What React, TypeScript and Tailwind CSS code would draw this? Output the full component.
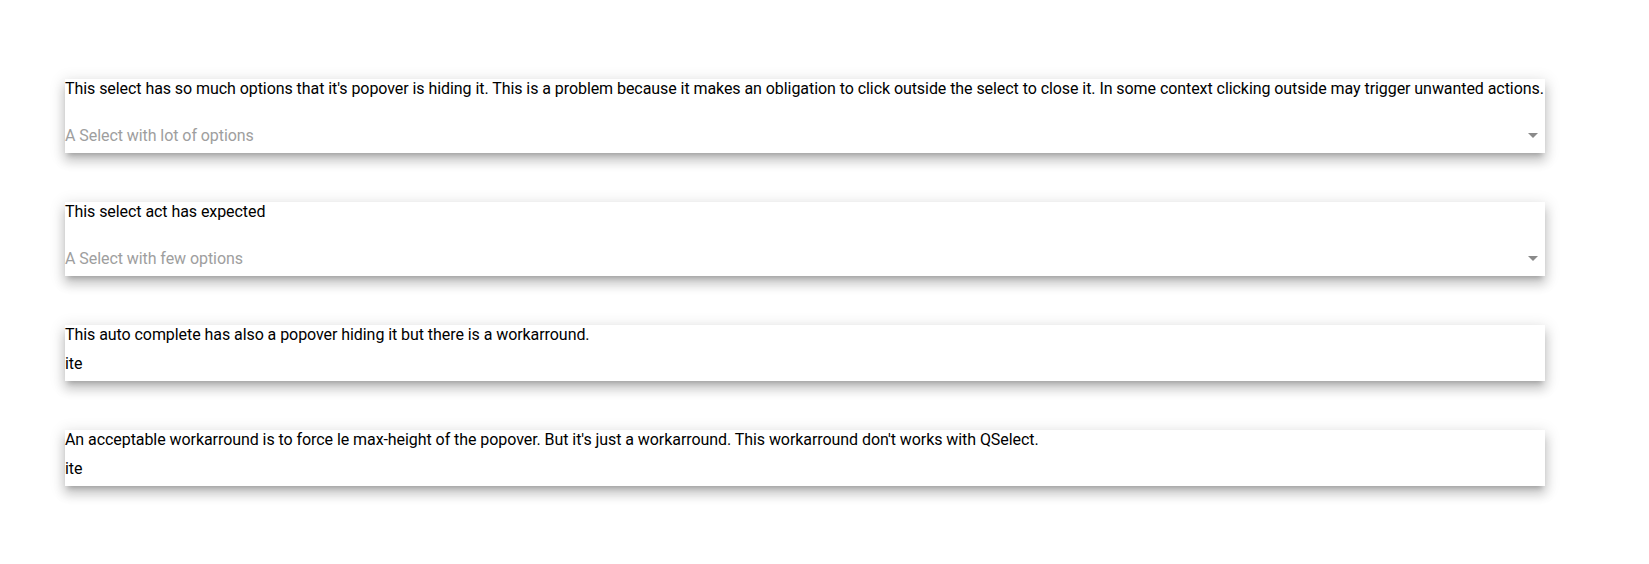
const cardShadow =
  "shadow-[0_5px_5px_-3px_rgba(0,0,0,0.2),0_8px_10px_1px_rgba(0,0,0,0.14),0_3px_14px_2px_rgba(0,0,0,0.12)]";

function SelectField({ placeholder }: { placeholder: string }) {
  return (
    <div className="relative h-[55px] flex items-end pb-[8px]">
      <span className="text-[16px] leading-[19px] text-[#9e9e9e]">{placeholder}</span>
      <svg
        className="absolute right-[7px] top-[35px]"
        width="10"
        height="5"
        viewBox="0 0 10 5"
      >
        <path d="M0 0h10L5 5z" fill="#8a8a8a" />
      </svg>
    </div>
  );
}

function InputField({ value }: { value: string }) {
  return (
    <div className="h-[37px] pt-[8px]">
      <span className="text-[16px] leading-[19px] text-black">{value}</span>
    </div>
  );
}

export default function App() {
  return (
    <div
      className="min-h-screen w-full bg-white pt-[79px] text-black tracking-[-0.065px]"
      style={{ fontFamily: "Roboto, 'Liberation Sans', sans-serif" }}
    >
      <div className="ml-[65px] w-[1480px] flex flex-col gap-[49px]">
        <div className={`bg-white ${cardShadow}`}>
          <p className="text-[16px] leading-[19px] whitespace-nowrap">
            This select has so much options that it's popover is hiding it. This is a problem because it makes an obligation to click outside the select to close it. In some context clicking outside may trigger unwanted actions.
          </p>
          <SelectField placeholder="A Select with lot of options" />
        </div>

        <div className={`bg-white ${cardShadow}`}>
          <p className="text-[16px] leading-[19px]">This select act has expected</p>
          <SelectField placeholder="A Select with few options" />
        </div>

        <div className={`bg-white ${cardShadow}`}>
          <p className="text-[16px] leading-[19px]">
            This auto complete has also a popover hiding it but there is a workarround.
          </p>
          <InputField value="ite" />
        </div>

        <div className={`bg-white ${cardShadow}`}>
          <p className="text-[16px] leading-[19px]">
            An acceptable workarround is to force le max-height of the popover. But it's just a workarround. This workarround don't works with QSelect.
          </p>
          <InputField value="ite" />
        </div>
      </div>
    </div>
  );
}
